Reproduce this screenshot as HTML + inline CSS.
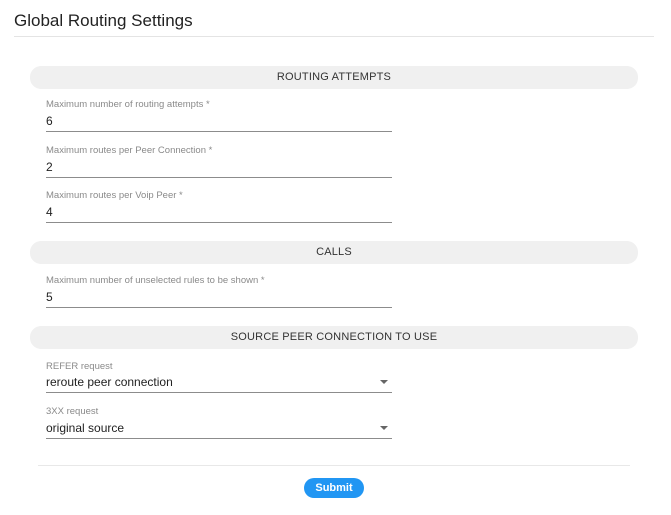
<!DOCTYPE html>
<html><head><meta charset="utf-8"><style>
*{margin:0;padding:0;box-sizing:border-box}
body{width:671px;height:515px;background:#fff;font-family:"Liberation Sans",Arial,sans-serif;position:relative;overflow:hidden;color:#222}
.a{position:absolute}
.title{left:14px;top:11px;font-size:17px;color:#222}
.hr{left:14px;top:36px;width:640px;height:1px;background:#e4e4e4}
.bar{left:30px;width:608px;height:23px;background:#f0f0f0;border-radius:11px;font-size:11px;color:#333;text-align:center;line-height:23px;letter-spacing:.2px}
.lbl{left:46px;font-size:9.5px;color:#8a8a8a}
.val{left:46px;font-size:12px;color:#222}
.ln{left:46px;width:346px;height:1px;background:#8c8c8c}
.arr{left:380px;width:0;height:0;border-left:4.5px solid transparent;border-right:4.5px solid transparent;border-top:4.5px solid #666}
.btn{left:304px;top:478px;width:60px;height:20px;background:#2196f3;border-radius:10px;color:#fff;font-weight:bold;font-size:11px;text-align:center;line-height:20px}
</style></head><body>
<div class="a title">Global Routing Settings</div>
<div class="a hr"></div>

<div class="a bar" style="top:66px">ROUTING ATTEMPTS</div>
<div class="a lbl" style="top:99px">Maximum number of routing attempts *</div>
<div class="a val" style="top:114px">6</div>
<div class="a ln" style="top:131px"></div>
<div class="a lbl" style="top:145px">Maximum routes per Peer Connection *</div>
<div class="a val" style="top:160px">2</div>
<div class="a ln" style="top:177px"></div>
<div class="a lbl" style="top:190px">Maximum routes per Voip Peer *</div>
<div class="a val" style="top:205px">4</div>
<div class="a ln" style="top:222px"></div>

<div class="a bar" style="top:241px">CALLS</div>
<div class="a lbl" style="top:275px">Maximum number of unselected rules to be shown *</div>
<div class="a val" style="top:290px">5</div>
<div class="a ln" style="top:307px"></div>

<div class="a bar" style="top:326px">SOURCE PEER CONNECTION TO USE</div>
<div class="a lbl" style="top:361px">REFER request</div>
<div class="a val" style="top:375px">reroute peer connection</div>
<div class="a arr" style="top:380px"></div>
<div class="a ln" style="top:392px"></div>
<div class="a lbl" style="top:406px">3XX request</div>
<div class="a val" style="top:421px">original source</div>
<div class="a arr" style="top:426px"></div>
<div class="a ln" style="top:438px"></div>

<div class="a" style="left:38px;top:465px;width:592px;height:1px;background:#e8e8e8"></div>
<div class="a btn">Submit</div>
</body></html>
